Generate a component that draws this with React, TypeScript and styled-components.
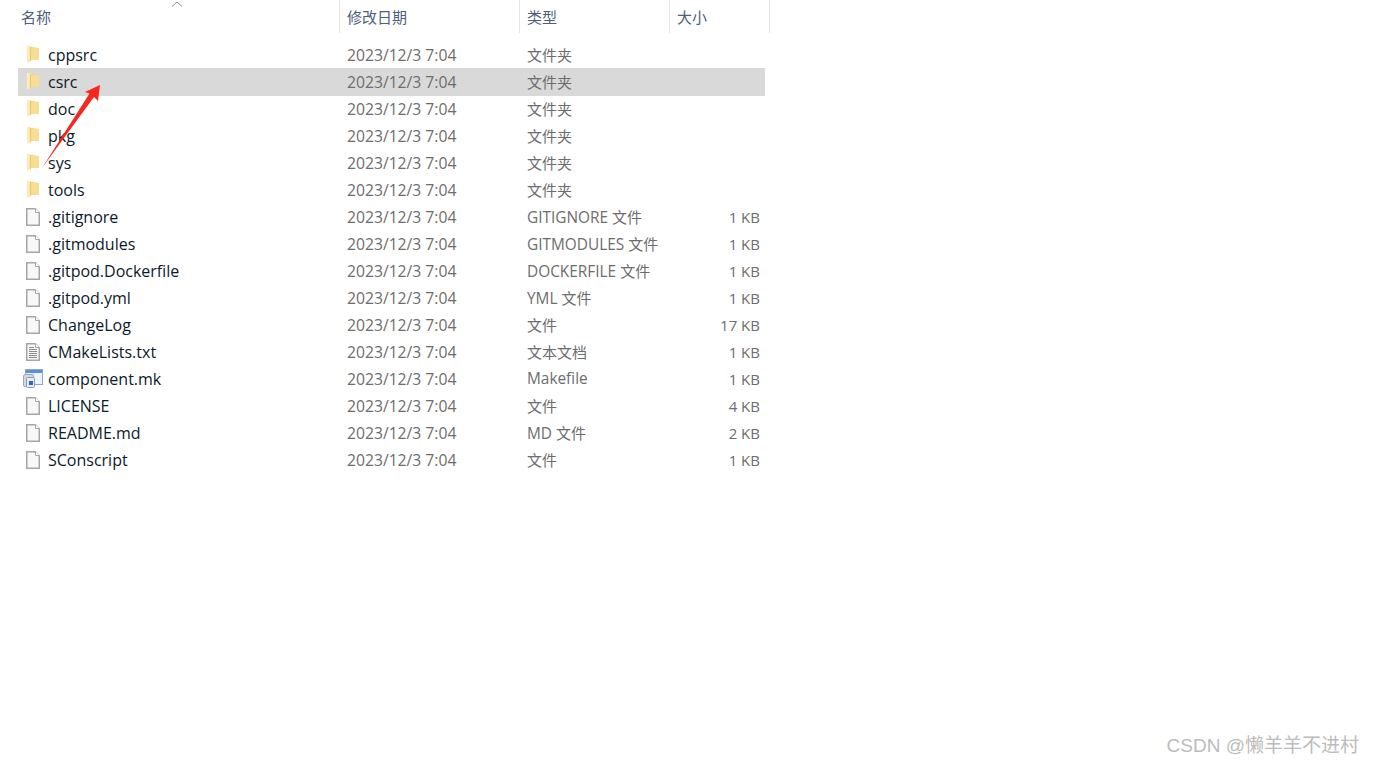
import React from "react";
import styled, { createGlobalStyle } from "styled-components";

type Kind = "folder" | "file" | "text" | "app";

const files: { name: string; latin?: string; type?: string; size: string; icon: Kind }[] = [
  { name: "cppsrc", type: "文件夹", size: "", icon: "folder" },
  { name: "csrc", type: "文件夹", size: "", icon: "folder" },
  { name: "doc", type: "文件夹", size: "", icon: "folder" },
  { name: "pkg", type: "文件夹", size: "", icon: "folder" },
  { name: "sys", type: "文件夹", size: "", icon: "folder" },
  { name: "tools", type: "文件夹", size: "", icon: "folder" },
  { name: ".gitignore", latin: "GITIGNORE ", type: "文件", size: "1 KB", icon: "file" },
  { name: ".gitmodules", latin: "GITMODULES ", type: "文件", size: "1 KB", icon: "file" },
  { name: ".gitpod.Dockerfile", latin: "DOCKERFILE ", type: "文件", size: "1 KB", icon: "file" },
  { name: ".gitpod.yml", latin: "YML ", type: "文件", size: "1 KB", icon: "file" },
  { name: "ChangeLog", type: "文件", size: "17 KB", icon: "file" },
  { name: "CMakeLists.txt", type: "文本文档", size: "1 KB", icon: "text" },
  { name: "component.mk", latin: "Makefile", size: "1 KB", icon: "app" },
  { name: "LICENSE", type: "文件", size: "4 KB", icon: "file" },
  { name: "README.md", latin: "MD ", type: "文件", size: "2 KB", icon: "file" },
  { name: "SConscript", type: "文件", size: "1 KB", icon: "file" },
];

const GlobalStyle = createGlobalStyle`
  html, body {
    margin: 0;
    background: #fff;
    height: 100%;
    overflow: hidden;
  }
  body {
    font-family: "Open Sans", "Noto Sans CJK SC", sans-serif;
  }
`;

const Page = styled.div`
  position: relative;
  width: 1374px;
  height: 765px;
  overflow: hidden;
`;

const Header = styled.div`
  display: grid;
  grid-template-columns: 340px 180px 150px 100px;
  width: 770px;
  height: 33px;
`;

const HeaderCell = styled.div<{ $pad: number }>`
  position: relative;
  box-sizing: border-box;
  padding: 7px 0 0 ${({ $pad }) => $pad}px;
  border-right: 1px solid #e5e5e5;
  font-size: 15px;
  line-height: 20px;
  color: #4c607a;
`;

const SortArrow = styled.svg`
  position: absolute;
  left: 171px;
  top: 1px;
`;

const List = styled.div`
  margin: 8px 0 0 18px;
  width: 747px;
`;

const Row = styled.div<{ $selected?: boolean }>`
  display: grid;
  grid-template-columns: 329px 180px 150px 88px;
  grid-template-rows: 27px;
  align-items: center;
  height: ${({ $selected }) => ($selected ? 28 : 27)}px;
  margin-bottom: ${({ $selected }) => ($selected ? -1 : 0)}px;
  background: ${({ $selected }) => ($selected ? "#d9d9d9" : "transparent")};
  font-size: 15.7px;
  color: #6d6d6d;
`;

const NameCell = styled.div`
  display: flex;
  align-items: center;
  padding-left: 5px;
  font-size: 16px;
  color: #0c1a2b;
`;

const IconSlot = styled.span`
  display: flex;
  justify-content: center;
  width: 20px;
  margin-right: 5px;
`;

const TypeCell = styled.div`
  font-size: 15px;
`;

const LatinPart = styled.span`
  font-size: 15.4px;
`;

const SizeCell = styled.div`
  text-align: right;
  padding-right: 5px;
  font-size: 15px;
`;

const Watermark = styled.div`
  position: absolute;
  right: 15px;
  top: 733px;
  font-family: "Liberation Sans", "Noto Sans CJK SC", sans-serif;
  font-size: 19px;
  line-height: 26px;
  color: #bcbcbc;
  white-space: nowrap;
`;

const ArrowOverlay = styled.svg`
  position: absolute;
  left: 0;
  top: 0;
  pointer-events: none;
`;

const FileIcon = ({ kind }: { kind: Kind }) => {
  if (kind === "folder") {
    return (
      <svg width="12" height="17" viewBox="0 0 12 17">
        <path d="M0 1h5l7 1v12H4z" fill="#f3d27c" />
        <path d="M4 2h8v12H4z" fill="#f8dd95" />
        <path d="M0 0h4v15l-4 2z" fill="#fcebb8" />
        <path d="M3 1h1v14H3z" fill="#eec65f" />
      </svg>
    );
  }
  if (kind === "app") {
    return (
      <svg width="20" height="19" viewBox="0 0 20 19">
        <rect x="2.5" y="0.5" width="17" height="15" fill="#eef3fb" stroke="#8ea8cc" />
        <rect x="3" y="1" width="16" height="3" fill="#5b8fd6" />
        <rect x="0.5" y="5.5" width="10" height="12" rx="1.5" fill="#cfd9e8" stroke="#9aa9bf" />
        <rect x="3.5" y="8.5" width="8" height="10" rx="1" fill="#e5ebf4" stroke="#8c9cb4" />
        <rect x="6" y="12" width="4" height="4" fill="#3c62a8" />
      </svg>
    );
  }
  return (
    <svg width="14" height="18" viewBox="0 0 14 18">
      <path d="M.75.75h8.5l4 4v12.5H.75z" fill="#f8f8f8" stroke="#a6a6a6" strokeWidth="1.5" />
      <path d="M9.5.5v4h4" fill="#fff" stroke="#a6a6a6" />
      {kind === "text" && (
        <path d="M3 4.5h5M3 6.5h8M3 8.5h8M3 10.5h8M3 12.5h8M3 14.5h8" stroke="#8a8a8a" />
      )}
    </svg>
  );
};

const App = () => {
  return (
    <Page>
      <GlobalStyle />
      <Header>
        <HeaderCell $pad={21}>
          名称
          <SortArrow width="12" height="6" viewBox="0 0 12 6">
            <path d="M1 5.5 6 1l5 4.5" fill="none" stroke="#8a8a8a" />
          </SortArrow>
        </HeaderCell>
        <HeaderCell $pad={7}>修改日期</HeaderCell>
        <HeaderCell $pad={7}>类型</HeaderCell>
        <HeaderCell $pad={7}>大小</HeaderCell>
      </Header>
      <List>
        {files.map((file) => (
          <Row key={file.name} $selected={file.name === "csrc"}>
            <NameCell>
              <IconSlot>
                <FileIcon kind={file.icon} />
              </IconSlot>
              {file.name}
            </NameCell>
            <div>2023/12/3 7:04</div>
            <TypeCell>
              {file.latin && <LatinPart>{file.latin}</LatinPart>}
              {file.type}
            </TypeCell>
            <SizeCell>{file.size}</SizeCell>
          </Row>
        ))}
      </List>
      <ArrowOverlay width="120" height="180" viewBox="0 0 120 180">
        <path d="M42 168 89.5 93.5 85 92l15-7-2 16-4-4z" fill="#f5281e" />
      </ArrowOverlay>
      <Watermark>CSDN @懒羊羊不进村</Watermark>
    </Page>
  );
};

export default App;
